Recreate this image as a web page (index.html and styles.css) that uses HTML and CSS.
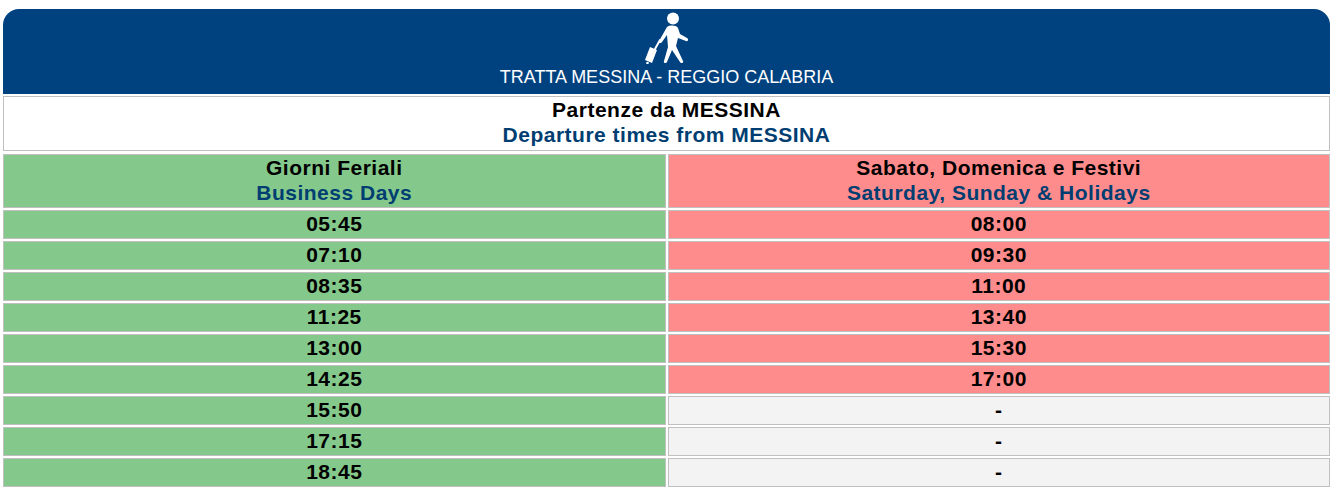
FILE: index.html
```html
<!DOCTYPE html>
<html lang="it">
<head>
<meta charset="utf-8">
<title>Tratta Messina - Reggio Calabria</title>
<link rel="stylesheet" href="styles.css">
</head>
<body>
<div class="page">
  <div class="banner">
    <svg class="icon" viewBox="0 0 48 52" width="48" height="52" aria-hidden="true">
      <circle cx="28" cy="6.5" r="6" fill="#fff"/>
      <path d="M22 15 C25 13 31 13 33 16 L35 22 L42 26 C44 27 43 30 41 29 L33 26 L31 34 L38 49 C39 51 36 52 35 50 L27 38 L22 50 C21 52 18 51 19 49 L23 35 L22 23 L17 30 C16 32 13 31 14 29 Z" fill="#fff"/>
      <path d="M5 35 L12 38 L7 51 L0 48 Z" fill="#fff"/>
      <path d="M10 37 L15 28" stroke="#fff" stroke-width="2" stroke-linecap="round"/>
      <circle cx="2.5" cy="51" r="1.3" fill="#fff"/>
    </svg>
    <div class="route">TRATTA MESSINA - REGGIO CALABRIA</div>
  </div>
  <div class="title">
    <div class="it">Partenze da MESSINA</div>
    <div class="en">Departure times from MESSINA</div>
  </div>
  <div class="grid">
    <div class="cell head green"><div class="it">Giorni Feriali</div><div class="en">Business Days</div></div>
    <div class="cell head red"><div class="it">Sabato, Domenica e Festivi</div><div class="en">Saturday, Sunday &amp; Holidays</div></div>
    <div class="cell green">05:45</div><div class="cell red">08:00</div>
    <div class="cell green">07:10</div><div class="cell red">09:30</div>
    <div class="cell green">08:35</div><div class="cell red">11:00</div>
    <div class="cell green">11:25</div><div class="cell red">13:40</div>
    <div class="cell green">13:00</div><div class="cell red">15:30</div>
    <div class="cell green">14:25</div><div class="cell red">17:00</div>
    <div class="cell green">15:50</div><div class="cell grey">-</div>
    <div class="cell green">17:15</div><div class="cell grey">-</div>
    <div class="cell green">18:45</div><div class="cell grey">-</div>
  </div>
</div>
</body>
</html>
```

FILE: styles.css
```css
html, body {
  margin: 0;
  padding: 0;
  background: #fff;
}
body {
  font-family: "Liberation Sans", Arial, Helvetica, sans-serif;
  color: #000;
}
.page {
  margin: 9px 7px 0 3px;
}
.banner {
  height: 85px;
  background: #00427f;
  border-radius: 16px 16px 0 0;
  display: flex;
  flex-direction: column;
  align-items: center;
  box-sizing: border-box;
  padding-top: 3px;
}
.icon {
  display: block;
  margin-left: 5px;
}
.route {
  color: #fff;
  font-size: 18px;
  margin-top: 3px;
  line-height: 20px;
}
.title {
  margin-top: 2px;
  border: 1px solid #c0c0c0;
  height: 55px;
  box-sizing: border-box;
  padding-bottom: 3px;
  display: flex;
  flex-direction: column;
  justify-content: center;
  align-items: center;
  text-align: center;
  font-weight: bold;
  font-size: 21px;
  letter-spacing: 0.5px;
  line-height: 25px;
}
.en {
  color: #003e72;
}
.grid {
  margin-top: 3px;
  display: grid;
  grid-template-columns: 1fr 1fr;
  grid-template-rows: 54px;
  grid-auto-rows: 29px;
  gap: 2px;
  font-weight: bold;
  font-size: 21px;
  letter-spacing: 0.5px;
}
.cell {
  border: 1px solid #c0c0c0;
  box-sizing: border-box;
  padding-bottom: 2px;
  display: flex;
  flex-direction: column;
  justify-content: center;
  align-items: center;
  text-align: center;
  line-height: 25px;
}
.green { background: #84c98b; }
.red { background: #ff8c8c; }
.grey { background: #f3f3f3; }
```
